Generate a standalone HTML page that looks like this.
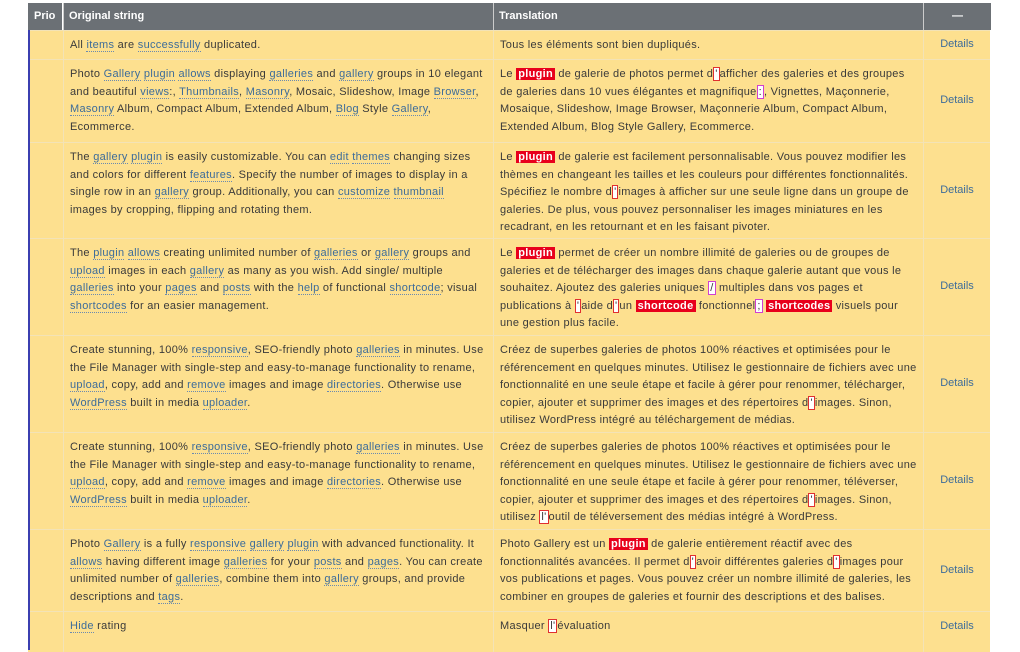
<!DOCTYPE html><html><head><meta charset="utf-8"><style>
body{margin:0;width:1020px;height:638px;background:#fff;overflow:hidden;font-family:"Liberation Sans",Arial,sans-serif;font-size:11px;color:#3a3a3a;}
.t{position:absolute;left:28px;top:3px;width:962px;}
.h{position:absolute;top:0;height:27px;background:#6b7075;color:#fff;font-weight:bold;line-height:27px;font-size:11px;}
.r{position:absolute;left:0;width:962px;background:#fde08f;border-top:1px solid #f3e3b6;}
.c{position:absolute;top:0;bottom:0;box-sizing:border-box;padding:6px 6px 0 6px;line-height:17.5px;border-left:1px solid #f3e3b6;letter-spacing:0.3px;white-space:nowrap;overflow:hidden;}
.bl{position:absolute;left:0;top:27px;width:2px;height:620px;background:#3b3fb0;}
a{color:#3d6c9a;text-decoration:none;border-bottom:1px dotted #6a8ab0;}
.d{color:#3d6c9a;text-align:center;display:flex;align-items:center;justify-content:center;padding:0;letter-spacing:0;}
.p{background:#e8001c;color:#fff;font-weight:bold;padding:0 2px;}
.q{border:1px solid #e03030;background:#fff;padding:0 1px;}
.m{border:1px solid #d040d0;background:#fff;padding:0 1px;}
</style></head><body>
<div class="t">
<div class="h" style="left:0;width:34px;padding-left:6px;box-sizing:border-box">Prio</div>
<div class="h" style="left:35px;width:430px;padding-left:5px;box-sizing:border-box;border-left:1px solid #ccc">Original string</div>
<div class="h" style="left:465px;width:430px;padding-left:5px;box-sizing:border-box;border-left:1px solid #ccc">Translation</div>
<div class="h" style="left:895px;width:67px;text-align:center;border-left:1px solid #ccc">—</div>

<div class="r" style="top:27px;height:28px"><div class="c" style="left:35px;width:430px">All <a>items</a> are <a>successfully</a> duplicated.</div><div class="c" style="left:465px;width:430px">Tous les éléments sont bien dupliqués.</div><div class="c d" style="left:895px;width:67px">Details</div></div>

<div class="r" style="top:56px;height:82px"><div class="c" style="left:35px;width:430px">Photo <a>Gallery</a> <a>plugin</a> <a>allows</a> displaying <a>galleries</a> and <a>gallery</a> groups in 10 elegant<br>and beautiful <a>views</a>:, <a>Thumbnails</a>, <a>Masonry</a>, Mosaic, Slideshow, Image <a>Browser</a>,<br><a>Masonry</a> Album, Compact Album, Extended Album, <a>Blog</a> Style <a>Gallery</a>,<br>Ecommerce.</div><div class="c" style="left:465px;width:430px">Le <span class="p">plugin</span> de galerie de photos permet d<span class="q">'</span>afficher des galeries et des groupes<br>de galeries dans 10 vues élégantes et magnifique<span class="m">:</span>, Vignettes, Maçonnerie,<br>Mosaique, Slideshow, Image Browser, Maçonnerie Album, Compact Album,<br>Extended Album, Blog Style Gallery, Ecommerce.</div><div class="c d" style="left:895px;width:67px">Details</div></div>

<div class="r" style="top:139px;height:95px"><div class="c" style="left:35px;width:430px">The <a>gallery</a> <a>plugin</a> is easily customizable. You can <a>edit</a> <a>themes</a> changing sizes<br>and colors for different <a>features</a>. Specify the number of images to display in a<br>single row in an <a>gallery</a> group. Additionally, you can <a>customize</a> <a>thumbnail</a><br>images by cropping, flipping and rotating them.</div><div class="c" style="left:465px;width:430px">Le <span class="p">plugin</span> de galerie est facilement personnalisable. Vous pouvez modifier les<br>thèmes en changeant les tailles et les couleurs pour différentes fonctionnalités.<br>Spécifiez le nombre d<span class="q">'</span>images à afficher sur une seule ligne dans un groupe de<br>galeries. De plus, vous pouvez personnaliser les images miniatures en les<br>recadrant, en les retournant et en les faisant pivoter.</div><div class="c d" style="left:895px;width:67px">Details</div></div>

<div class="r" style="top:235px;height:96px"><div class="c" style="left:35px;width:430px">The <a>plugin</a> <a>allows</a> creating unlimited number of <a>galleries</a> or <a>gallery</a> groups and<br><a>upload</a> images in each <a>gallery</a> as many as you wish. Add single/ multiple<br><a>galleries</a> into your <a>pages</a> and <a>posts</a> with the <a>help</a> of functional <a>shortcode</a>; visual<br><a>shortcodes</a> for an easier management.</div><div class="c" style="left:465px;width:430px">Le <span class="p">plugin</span> permet de créer un nombre illimité de galeries ou de groupes de<br>galeries et de télécharger des images dans chaque galerie autant que vous le<br>souhaitez. Ajoutez des galeries uniques <span class="m">/</span> multiples dans vos pages et<br>publications à <span class="q">'</span>aide d<span class="q">'</span>un <span class="p">shortcode</span> fonctionnel<span class="m">;</span> <span class="p">shortcodes</span> visuels pour<br>une gestion plus facile.</div><div class="c d" style="left:895px;width:67px">Details</div></div>

<div class="r" style="top:332px;height:96px"><div class="c" style="left:35px;width:430px">Create stunning, 100% <a>responsive</a>, SEO-friendly photo <a>galleries</a> in minutes. Use<br>the File Manager with single-step and easy-to-manage functionality to rename,<br><a>upload</a>, copy, add and <a>remove</a> images and image <a>directories</a>. Otherwise use<br><a>WordPress</a> built in media <a>uploader</a>.</div><div class="c" style="left:465px;width:430px">Créez de superbes galeries de photos 100% réactives et optimisées pour le<br>référencement en quelques minutes. Utilisez le gestionnaire de fichiers avec une<br>fonctionnalité en une seule étape et facile à gérer pour renommer, télécharger,<br>copier, ajouter et supprimer des images et des répertoires d<span class="q">'</span>images. Sinon,<br>utilisez WordPress intégré au téléchargement de médias.</div><div class="c d" style="left:895px;width:67px">Details</div></div>

<div class="r" style="top:429px;height:96px"><div class="c" style="left:35px;width:430px">Create stunning, 100% <a>responsive</a>, SEO-friendly photo <a>galleries</a> in minutes. Use<br>the File Manager with single-step and easy-to-manage functionality to rename,<br><a>upload</a>, copy, add and <a>remove</a> images and image <a>directories</a>. Otherwise use<br><a>WordPress</a> built in media <a>uploader</a>.</div><div class="c" style="left:465px;width:430px">Créez de superbes galeries de photos 100% réactives et optimisées pour le<br>référencement en quelques minutes. Utilisez le gestionnaire de fichiers avec une<br>fonctionnalité en une seule étape et facile à gérer pour renommer, téléverser,<br>copier, ajouter et supprimer des images et des répertoires d<span class="q">'</span>images. Sinon,<br>utilisez <span class="q">l'</span>outil de téléversement des médias intégré à WordPress.</div><div class="c d" style="left:895px;width:67px">Details</div></div>

<div class="r" style="top:526px;height:81px"><div class="c" style="left:35px;width:430px">Photo <a>Gallery</a> is a fully <a>responsive</a> <a>gallery</a> <a>plugin</a> with advanced functionality. It<br><a>allows</a> having different image <a>galleries</a> for your <a>posts</a> and <a>pages</a>. You can create<br>unlimited number of <a>galleries</a>, combine them into <a>gallery</a> groups, and provide<br>descriptions and <a>tags</a>.</div><div class="c" style="left:465px;width:430px">Photo Gallery est un <span class="p">plugin</span> de galerie entièrement réactif avec des<br>fonctionnalités avancées. Il permet d<span class="q">'</span>avoir différentes galeries d<span class="q">'</span>images pour<br>vos publications et pages. Vous pouvez créer un nombre illimité de galeries, les<br>combiner en groupes de galeries et fournir des descriptions et des balises.</div><div class="c d" style="left:895px;width:67px">Details</div></div>

<div class="r" style="top:608px;height:40px"><div class="c" style="left:35px;width:430px"><a>Hide</a> rating</div><div class="c" style="left:465px;width:430px">Masquer <span class="q">l'</span>évaluation</div><div class="c d" style="left:895px;width:67px;align-items:flex-start;padding-top:6px">Details</div></div>
<div class="bl"></div>
</div>
</body></html>
